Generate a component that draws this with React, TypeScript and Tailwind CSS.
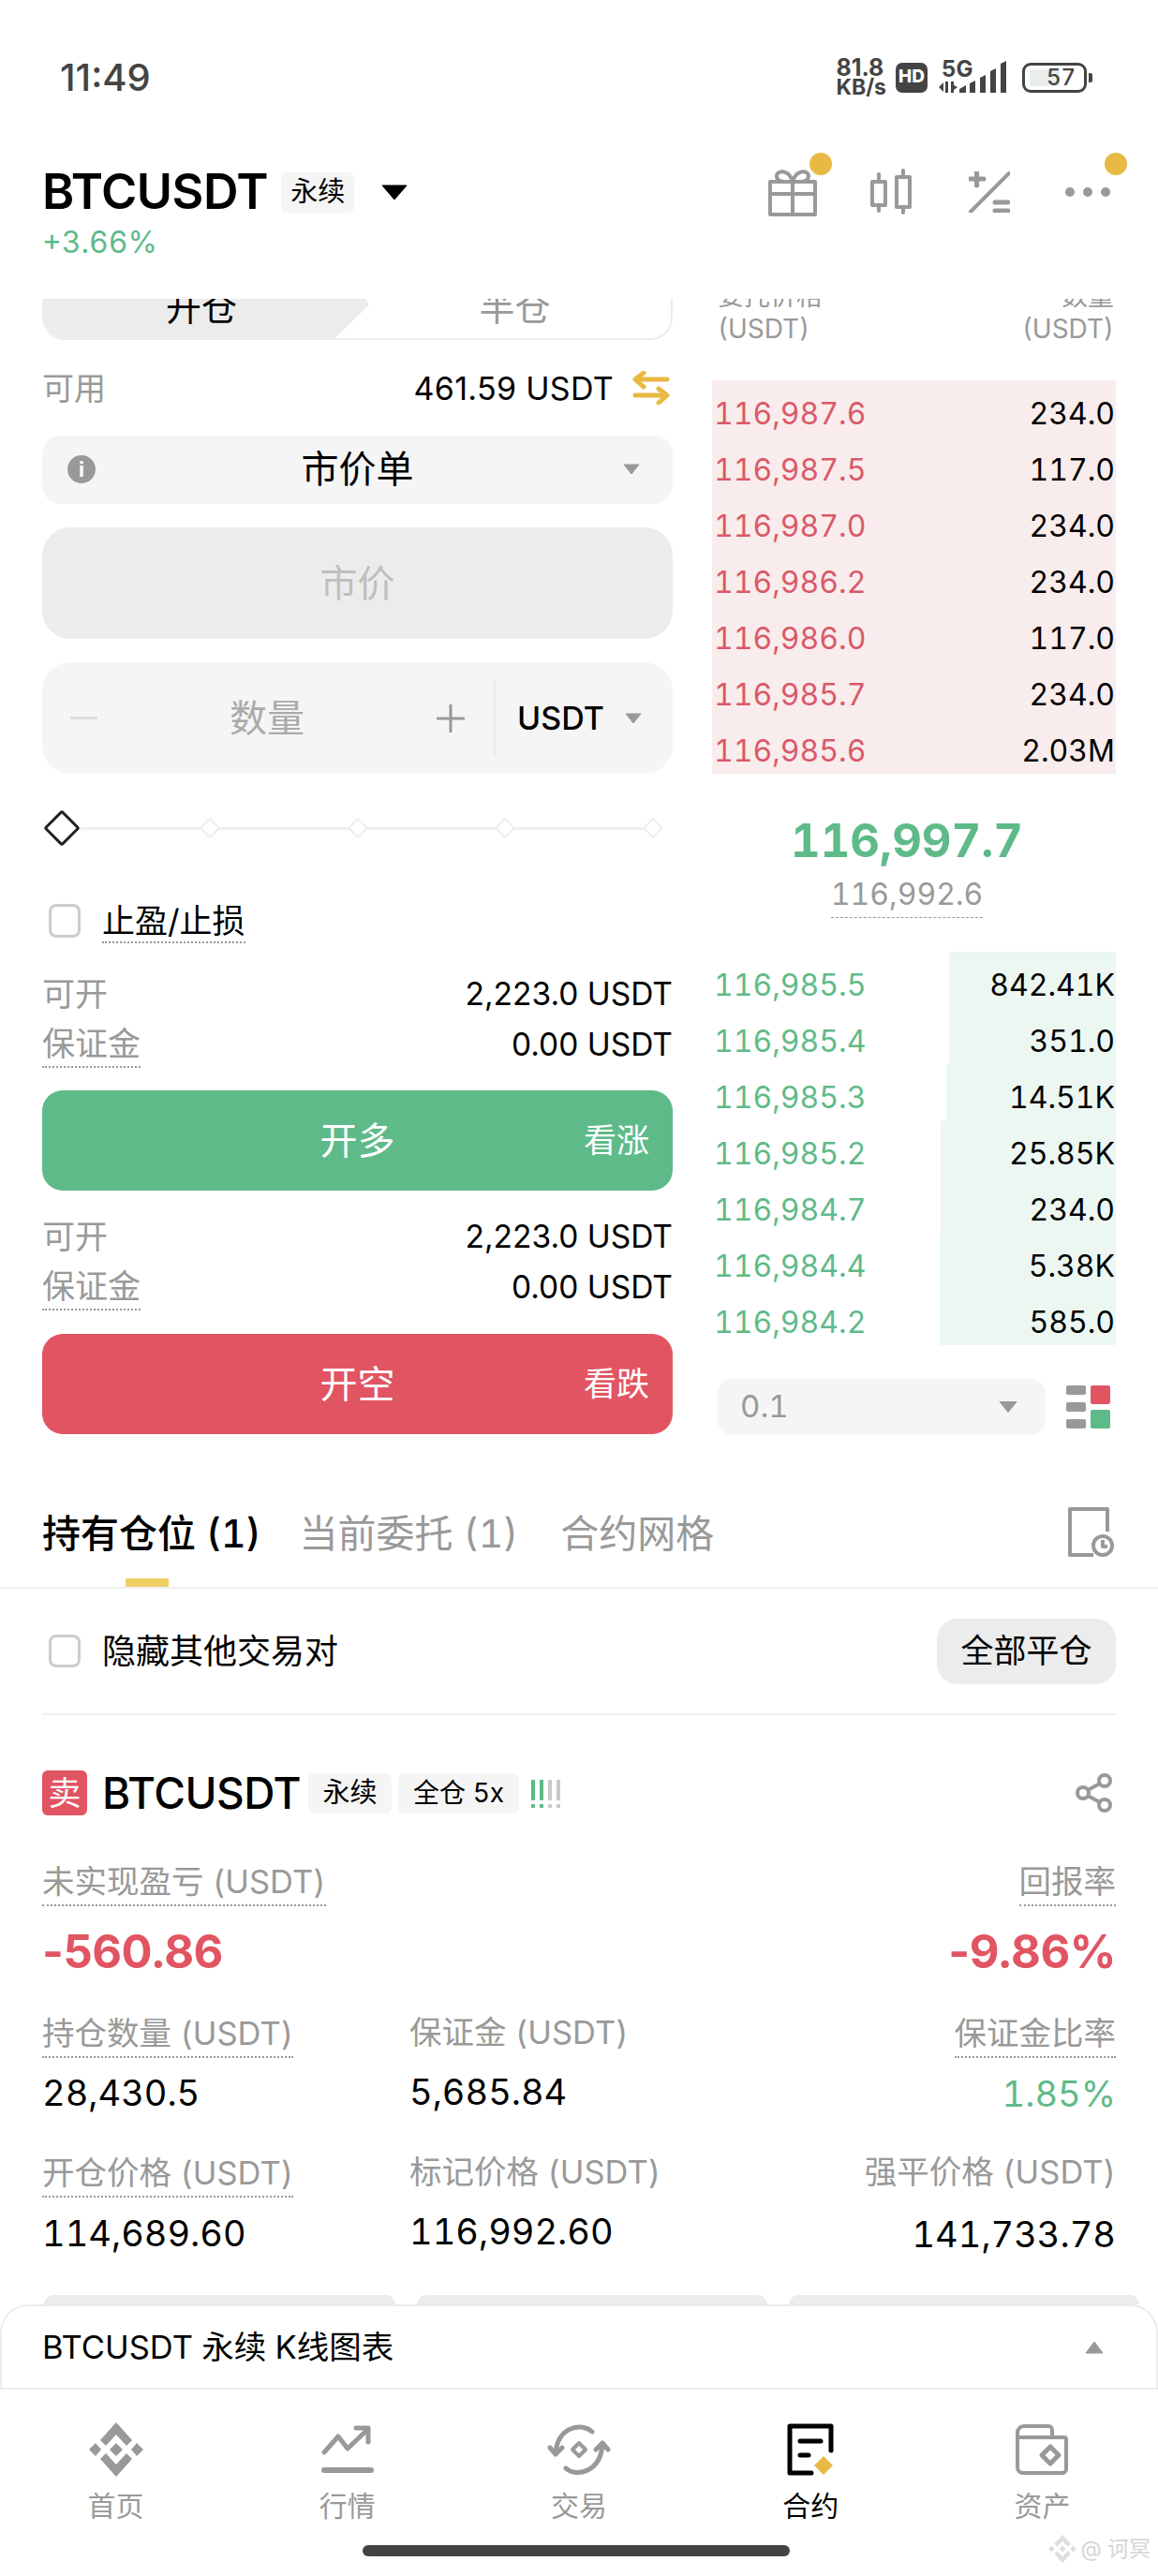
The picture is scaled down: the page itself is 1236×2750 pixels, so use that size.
const asks = [
  ['116,987.6', '234.0'],
  ['116,987.5', '117.0'],
  ['116,987.0', '234.0'],
  ['116,986.2', '234.0'],
  ['116,986.0', '117.0'],
  ['116,985.7', '234.0'],
  ['116,985.6', '2.03M'],
]

const bids = [
  ['116,985.5', '842.41K', 178],
  ['116,985.4', '351.0', 178],
  ['116,985.3', '14.51K', 181],
  ['116,985.2', '25.85K', 187],
  ['116,984.7', '234.0', 187],
  ['116,984.4', '5.38K', 188],
  ['116,984.2', '585.0', 188],
] as const

function Caret({ className = '' }: { className?: string }) {
  return (
    <svg width="18" height="12" viewBox="0 0 18 12" className={className}>
      <path d="M1 1h16L9 11z" fill="#999" stroke="#999" strokeLinejoin="round" />
    </svg>
  )
}

function Dotted({ children }: { children: React.ReactNode }) {
  return <span className="inline-block border-b-2 border-dotted border-[#999] pb-[3px] leading-[42px]">{children}</span>
}

function StatusBar() {
  return (
    <div className="h-[164px] flex items-center justify-between pl-[64px] pr-[70px] pt-[1px] text-[#444]">
      <span className="text-[40px] font-medium leading-none normal-nums">11:49</span>
      <div className="flex items-center">
        <div className="flex flex-col font-bold text-[25px] leading-[21px] normal-nums">
          <span>81.8</span>
          <span className="text-[23px]">KB/s</span>
        </div>
        <div className="ml-[10px] w-[34px] h-[32px] rounded-[7px] bg-[#444] text-white text-[19px] font-extrabold flex items-center justify-center">
          HD
        </div>
        <svg width="74" height="36" viewBox="0 0 74 36" className="ml-[12px] overflow-visible">
          <text x="3" y="17" fontSize="24" fontWeight="700" fill="#444" fontFamily="Inter, sans-serif">5G</text>
          <path d="M0 28l5-5v10zM7 22h3v12H7zM13 22h3v12h-3zM16 26l4 2-4 3z" fill="#444" />
          <path d="M22 34v-4l7-4v8zM33 34V24l6-3v13zM44 34V18l6-3v19zM55 34V11l6-3v26zM66 34V3l6-3v34z" fill="#444" />
        </svg>
        <div className="ml-[15px] relative w-[69px] h-[32px] rounded-[9px] border-[3px] border-[#444] flex items-center justify-center pl-[14px]">
          <div className="absolute left-[5px] top-[4px] bottom-[4px] w-[32px] bg-[#e8efeb]" />
          <span className="relative text-[24px] font-medium leading-none">57</span>
        </div>
        <div className="ml-[2px] w-[4px] h-[10px] rounded-r-[2px] bg-[#444]" />
      </div>
    </div>
  )
}

function Header() {
  return (
    <div className="h-[155px] flex justify-between pl-[45px] pr-[51px]">
      <div>
        <div className="flex items-center h-[44px] mt-[19px]">
          <span className="text-[52px] font-semibold text-black leading-none tracking-[-0.5px] normal-nums">BTCUSDT</span>
          <span className="ml-[14px] w-[78px] h-[43px] rounded-[6px] bg-[#f5f5f5] text-[29px] text-black flex items-center justify-center">永续</span>
          <svg width="28" height="17" viewBox="0 0 28 17" className="ml-[29px]">
            <path d="M1 1h26L14 16z" fill="#000" stroke="#000" strokeLinejoin="round" />
          </svg>
        </div>
        <div className="mt-[12px] text-[32px] leading-[40px] text-[#5fba89]">+3.66%</div>
      </div>
      <div className="flex items-start pt-0">
        <div className="relative mt-[15px] w-[52px] h-[52px]">
          <svg width="52" height="52" viewBox="0 0 52 52" fill="none" stroke="#999" strokeWidth="4" strokeLinejoin="round">
            <path d="M2 15h48v35H2zM2 28h48M26 15v35M26 15c-4-14-18-13-17-5 1 4 5 5 8 5M26 15c4-14 18-13 17-5-1 4-5 5-8 5" />
          </svg>
          <div className="absolute -top-[16px] left-[44px] w-[24px] h-[24px] rounded-full bg-[#e8ba43]" />
        </div>
        <svg width="44" height="49" viewBox="0 0 44 49" fill="none" stroke="#999" strokeWidth="4" strokeLinecap="round" strokeLinejoin="round" className="ml-[57px] mt-[16px]">
          <path d="M2 14h14v25H2zM9 6v8M9 39v6M28 9h14v32H28zM35 2v7M35 41v6" />
        </svg>
        <svg width="44" height="44" viewBox="0 0 44 44" fill="none" stroke="#999" strokeLinecap="round" className="ml-[61px] mt-[19px]">
          <path d="M2 43L43 2" strokeWidth="4" />
          <path d="M1 8h15M8.500 1v14M28 33h14M28 42h14" strokeWidth="5" />
        </svg>
        <div className="relative ml-[59px] mt-[15px] w-[48px] h-[52px] flex items-center justify-between">
          <span className="w-[10px] h-[10px] rounded-full bg-[#999]" />
          <span className="w-[10px] h-[10px] rounded-full bg-[#999]" />
          <span className="w-[10px] h-[10px] rounded-full bg-[#999]" />
          <div className="absolute -top-[16px] left-[42px] w-[24px] h-[24px] rounded-full bg-[#e8ba43]" />
        </div>
      </div>
    </div>
  )
}

function InfoRows() {
  return (
    <>
      <div className="flex justify-between h-[54px] items-center text-[33.500px]">
        <span className="text-[#999] text-[35px]">可开</span>
        <span className="text-black normal-nums">2,223.0 USDT</span>
      </div>
      <div className="flex justify-between h-[54px] items-start text-[33.500px]">
        <span className="text-[#999] text-[35px]"><Dotted>保证金</Dotted></span>
        <span className="text-black leading-[42px] mt-[6px] normal-nums">0.00 USDT</span>
      </div>
    </>
  )
}

function OrderForm() {
  return (
    <div className="w-[673px]">
      <div className="h-[44px] overflow-hidden flex flex-col justify-end">
        <div className="relative h-[88px] shrink-0 rounded-b-[24px] border-r-2 border-b-2 border-[#ececec] flex pt-[18px] text-[38px] leading-[70px]">
          <div className="absolute inset-0 -mr-[1px] rounded-bl-[24px] bg-[#ececec] [clip-path:polygon(0_0,48%_0,51.900%_59%,46.500%_100%,0_100%)]" />
          <div className="relative w-[338px] text-center text-black pl-[2px]">开仓</div>
          <div className="relative flex-1 text-center text-[#999]">半仓</div>
        </div>
      </div>

      <div className="mt-[26px] h-[50px] flex items-center justify-between text-[34px]">
        <span className="text-[#999]">可用</span>
        <div className="flex items-center">
          <span className="text-black normal-nums tracking-[0.3px]">461.59 USDT</span>
          <svg width="40" height="36" viewBox="0 0 40 36" fill="none" stroke="#e8ba43" strokeWidth="5" strokeLinecap="round" strokeLinejoin="round" className="ml-[20px] mr-[3px]">
            <path d="M37 9H4M12 2L3 9l9 8M3 26h33M28 19l9 7-9 8" />
          </svg>
        </div>
      </div>

      <div className="mt-[26px] h-[73px] rounded-[20px] bg-[#f5f5f5] relative flex items-center justify-center text-[40px] leading-[56px] pb-[2px] text-black">
        <div className="absolute left-[27px] top-[21px] w-[30px] h-[30px] rounded-full bg-[#999] text-white text-[22px] leading-none font-bold flex items-center justify-center">i</div>
        市价单
        <Caret className="absolute right-[35px]" />
      </div>

      <div className="mt-[25px] h-[119px] rounded-[30px] bg-[#ececec] flex items-center justify-center text-[40px] text-[#bfbfbf]">市价</div>

      <div className="mt-[25px] h-[119px] rounded-[30px] bg-[#f5f5f5] flex items-center">
        <div className="w-[451px] flex items-center justify-between pl-[30px]">
          <div className="w-[29px] h-[3px] bg-[#dcdcdc]" />
          <span className="text-[40px] text-[#aaa]">数量</span>
          <svg width="30" height="30" viewBox="0 0 30 30" stroke="#999" strokeWidth="3">
            <path d="M0 15h30M15 0v30" />
          </svg>
        </div>
        <div className="ml-[31px] w-[2px] h-[83px] bg-[#ececec]" />
        <span className="ml-[23px] text-[34px] font-medium text-black">USDT</span>
        <Caret className="ml-[22px]" />
      </div>

      <div className="mt-[35px] h-[46px] relative flex items-center justify-between">
        <div className="absolute left-[30px] right-[20px] top-[22px] h-[3px] bg-[#f0f0f0]" />
        <div className="relative w-[42px] flex justify-center">
          <div className="w-[28px] h-[28px] rotate-45 rounded-[3px] border-[3px] border-[#222] bg-white" />
        </div>
        {[0, 1, 2, 3].map((i) => (
          <div key={i} className="relative w-[42px] flex justify-center">
            <div className="w-[16px] h-[16px] rotate-45 rounded-[2px] border-2 border-[#eee] bg-white" />
          </div>
        ))}
      </div>

      <div className="mt-[50px] h-[50px] flex items-start">
        <div className="ml-[7px] mt-[8px] w-[34px] h-[36px] rounded-[8px] border-[3px] border-[#ccc]" />
        <span className="ml-[23px] text-[35px] text-black"><span className="inline-block border-b-2 border-dotted border-[#999] pb-[1px] leading-[42px]">止盈/止损</span></span>
      </div>

      <div className="mt-[27px]"><InfoRows /></div>
      <div className="mt-[22px] h-[107px] rounded-[22px] bg-[#5fba89] relative flex items-center justify-center text-white text-[40px]">
        开多
        <span className="absolute right-[25px] text-[35px]">看涨</span>
      </div>
      <div className="mt-[22px]"><InfoRows /></div>
      <div className="mt-[23px] h-[107px] rounded-[22px] bg-[#e15563] relative flex items-center justify-center text-white text-[40px]">
        开空
        <span className="absolute right-[25px] text-[35px]">看跌</span>
      </div>
    </div>
  )
}

function OrderBook() {
  return (
    <div className="w-[431px] ml-[42px]">
      <div className="h-[50px] overflow-hidden flex flex-col justify-end text-[28px] leading-[35px] text-[#999] pl-[6px] pr-[2px]">
        <div className="flex justify-between">
          <span>委托价格</span>
          <span>数量</span>
        </div>
        <div className="flex justify-between">
          <span>(USDT)</span>
          <span>(USDT)</span>
        </div>
      </div>

      <div className="mt-[37px] bg-[#f9ecec]">
        {asks.map(([price, qty]) => (
          <div key={price} className="h-[60px] pt-[12px] flex items-center justify-between pl-[2px] pr-[1px] text-[32px]">
            <span className="text-[#d9596a]">{price}</span>
            <span className="text-black">{qty}</span>
          </div>
        ))}
      </div>

      <div className="mt-[42px] pr-[15px] text-center text-[49px] font-bold leading-[60px] text-[#5fba89]">116,997.7</div>
      <div className="flex justify-center mt-[7px]">
        <span className="inline-block text-[32px] leading-[40px] text-[#999] border-b border-dashed border-[#999] pb-[4px] -ml-[15px]">116,992.6</span>
      </div>

      <div className="mt-[36px]">
        {bids.map(([price, qty, bar]) => (
          <div key={price} className="relative h-[60px] pt-[12px] flex items-center justify-between pl-[2px] pr-[1px] text-[32px]">
            <div className="absolute right-0 top-0 bottom-0 bg-[#ecf7f2]" style={{ width: bar }} />
            <span className="relative text-[#5fba89]">{price}</span>
            <span className="relative text-black">{qty}</span>
          </div>
        ))}
      </div>

      <div className="mt-[36px] flex items-center">
        <div className="ml-[6px] w-[350px] h-[60px] rounded-[16px] bg-[#f5f5f5] flex items-center justify-between pl-[24px] pr-[31px] text-[33px] text-[#999]">
          0.1
          <Caret className="scale-110" />
        </div>
        <svg width="47" height="46" viewBox="0 0 47 46" className="ml-[22px]">
          <rect x="0" y="0" width="21" height="10" rx="2" fill="#999" />
          <rect x="0" y="18" width="21" height="10" rx="2" fill="#999" />
          <rect x="0" y="36" width="21" height="10" rx="2" fill="#999" />
          <rect x="26" y="0" width="21" height="20" rx="2" fill="#e15563" />
          <rect x="26" y="26" width="21" height="20" rx="2" fill="#5fba89" />
        </svg>
      </div>
    </div>
  )
}

function Positions() {
  return (
    <>
      <div className="relative h-[164px] border-b-2 border-[#f0f0f0] flex items-start justify-between pl-[45px] pr-[47px] pt-[78px] text-[41px] leading-[54px]">
        <div className="flex">
          <span className="font-medium text-black">持有仓位 (1)</span>
          <span className="ml-[41px] text-[#999]">当前委托 (1)</span>
          <span className="ml-[45px] text-[#999]">合约网格</span>
        </div>
        <svg width="50" height="54" viewBox="0 0 50 54" fill="none" stroke="#999" strokeWidth="4" className="mt-[-1px]" strokeLinejoin="round">
          <path d="M28 51H3V2h40v24" />
          <circle cx="38" cy="41" r="10" />
          <path d="M38 35v7h5" />
        </svg>
        <div className="absolute left-[134px] bottom-0 w-[46px] h-[9px] bg-[#f0cf62]" />
      </div>

      <div className="mx-[45px] h-[135px] border-b-2 border-[#f0f0f0] flex items-center justify-between">
        <div className="flex items-center">
          <div className="ml-[7px] w-[34px] h-[35px] rounded-[8px] border-[3px] border-[#ccc]" />
          <span className="ml-[23px] text-[36px] text-black">隐藏其他交易对</span>
        </div>
        <div className="w-[191px] h-[70px] rounded-[22px] bg-[#ececec] flex items-center justify-center text-[35px] text-black">全部平仓</div>
      </div>

      <div className="mx-[45px] mt-[59px] h-[48px] flex items-center">
        <div className="w-[48px] h-[48px] rounded-[6px] bg-[#e15563] text-white text-[35px] flex items-center justify-center">卖</div>
        <span className="ml-[16px] text-[46px] font-medium text-black leading-none tracking-[-0.5px]">BTCUSDT</span>
        <span className="ml-[8px] w-[89px] h-[43px] rounded-[6px] bg-[#f5f5f5] text-[29px] text-black flex items-center justify-center">永续</span>
        <span className="ml-[7px] w-[129px] h-[43px] rounded-[6px] bg-[#f5f5f5] text-[28px] text-black flex items-center justify-center">全仓 5x</span>
        <div className="ml-[13px] flex gap-[5px] mt-[2px]">
          {['#5fba89', '#5fba89', '#c9c9c9', '#c9c9c9'].map((c, i) => (
            <svg key={i} width="4" height="30" viewBox="0 0 4 30">
              <path d="M0 0h4v22H0zM0 26h4v4H0z" fill={c} />
            </svg>
          ))}
        </div>
        <svg width="42" height="42" viewBox="0 0 42 42" fill="none" stroke="#999" strokeWidth="4" className="ml-auto mr-[1px]">
          <circle cx="31" cy="8" r="6" />
          <circle cx="8" cy="21" r="6" />
          <circle cx="31" cy="34" r="6" />
          <path d="M13 18l13-7M13 24l13 7" />
        </svg>
      </div>

      <div className="mx-[45px] mt-[50px] flex items-start justify-between text-[34.500px] text-[#999]">
        <Dotted>未实现盈亏 (USDT)</Dotted>
        <Dotted>回报率</Dotted>
      </div>
      <div className="mx-[45px] mt-[16px] flex justify-between text-[49px] font-bold leading-[66px] tracking-[-0.5px] text-[#e15563] normal-nums">
        <span>-560.86</span>
        <span>-9.86%</span>
      </div>

      <div className="mx-[45px] mt-[28px] grid grid-cols-[392px_1fr_auto] text-[34.500px] text-[#999]">
        <div>
          <Dotted>持仓数量 (USDT)</Dotted>
          <div className="mt-[12px] text-[38px] leading-[50px] text-black">28,430.5</div>
        </div>
        <div className="pt-[4px]">
          <span className="block leading-[42px]">保证金 (USDT)</span>
          <div className="mt-[17px] text-[38px] leading-[50px] text-black">5,685.84</div>
        </div>
        <div className="text-right">
          <Dotted>保证金比率</Dotted>
          <div className="mt-[13px] text-[38px] leading-[50px] text-[#5fba89]">1.85%</div>
        </div>
      </div>

      <div className="mx-[45px] mt-[34px] grid grid-cols-[392px_1fr_auto] text-[34.500px] text-[#999]">
        <div>
          <Dotted>开仓价格 (USDT)</Dotted>
          <div className="mt-[13px] text-[38px] leading-[50px] text-black">114,689.60</div>
        </div>
        <div className="pt-[4px]">
          <span className="block leading-[42px]">标记价格 (USDT)</span>
          <div className="mt-[17px] text-[38px] leading-[50px] text-black">116,992.60</div>
        </div>
        <div className="text-right pt-[4px]">
          <span className="block leading-[42px]">强平价格 (USDT)</span>
          <div className="mt-[20px] text-[38px] leading-[50px] text-black">141,733.78</div>
        </div>
      </div>
    </>
  )
}

function BottomNav() {
  const items = [
    {
      label: '首页',
      active: false,
      icon: (
        <svg width="58" height="58" viewBox="0 0 58 58" fill="#999">
          <path d="M29 0l17 19-6 6-11-12-11 12-6-6zM29 58l17-19-6-6-11 12-11-12-6 6zM29 22l7 7-7 7-7-7zM0 29l7-7 6 7-6 7zM45 29l6-7 7 7-7 7z" />
        </svg>
      ),
    },
    {
      label: '行情',
      active: false,
      icon: (
        <svg width="56" height="52" viewBox="0 0 56 52" fill="none" stroke="#999" strokeWidth="5" strokeLinecap="round" strokeLinejoin="round">
          <path d="M3 29l15-17 10 13L50 4M37 3h13v15" />
          <path d="M3 48h50" strokeWidth="6" />
        </svg>
      ),
    },
    {
      label: '交易',
      active: false,
      icon: (
        <svg width="68" height="54" viewBox="0 0 68 54" fill="none" stroke="#999" strokeWidth="5" strokeLinecap="round" strokeLinejoin="round">
          <path d="M48 8C37-2 12 2 9 30M3 25l6 7 7-7M20 47c11 10 37 4 39-25M52 27l7-7 6 7" />
          <path d="M34 20l7 7-7 7-7-7z" strokeWidth="4" />
        </svg>
      ),
    },
    {
      label: '合约',
      active: true,
      icon: (
        <svg width="50" height="56" viewBox="0 0 50 56" fill="none" stroke="#000" strokeWidth="5" strokeLinecap="round" strokeLinejoin="round">
          <path d="M26 53H3V3h44v26M14 19h22M14 34h9" />
          <path d="M39 35l10 10-10 10-10-10z" fill="#e8ba43" stroke="none" />
        </svg>
      ),
    },
    {
      label: '资产',
      active: false,
      icon: (
        <svg width="56" height="54" viewBox="0 0 56 54" fill="none" stroke="#999" strokeWidth="4" strokeLinejoin="round">
          <path d="M2 9a7 7 0 0 1 7-7h26a4 4 0 0 1 4 4v8h13a2 2 0 0 1 2 2v32a4 4 0 0 1-4 4H8a6 6 0 0 1-6-6zM2 14h37" />
          <path d="M37 24l9 9-9 9-9-9z" strokeWidth="5" />
        </svg>
      ),
    },
  ]
  return (
    <div className="grid grid-cols-5 pt-[35px]">
      {items.map((item) => (
        <div key={item.label} className="flex flex-col items-center">
          <div className="h-[58px] flex items-center justify-center">{item.icon}</div>
          <span className={`mt-[13px] text-[30px] leading-[36px] ${item.active ? 'text-black' : 'text-[#999]'}`}>{item.label}</span>
        </div>
      ))}
    </div>
  )
}

export default function App() {
  return (
    <div className="relative w-[1236px] h-[2750px] overflow-hidden bg-white tabular-nums font-[Inter,'Noto_Sans_CJK_SC',sans-serif]">
      <StatusBar />
      <Header />
      <div className="flex px-[45px]">
        <OrderForm />
        <OrderBook />
      </div>
      <Positions />

      <div className="mt-[40px] flex pl-[47px] gap-[23px]">
        <div className="w-[375px] h-[10px] shrink-0 rounded-t-[12px] bg-[#ececec]" />
        <div className="w-[374px] h-[10px] shrink-0 rounded-t-[12px] bg-[#ececec]" />
        <div className="w-[374px] h-[10px] shrink-0 rounded-t-[12px] bg-[#ececec]" />
      </div>
      <div className="h-[91px] rounded-t-[30px] border-x-2 border-t-2 border-b-2 border-[#ececec] flex items-center justify-between pl-[43px] pr-[56px] bg-white">
        <span className="text-[34.500px] text-black">BTCUSDT 永续 K线图表</span>
        <svg width="20" height="14" viewBox="0 0 20 14">
          <path d="M1 13L10 1l9 12z" fill="#999" stroke="#999" strokeLinejoin="round" />
        </svg>
      </div>
      <BottomNav />

      <div className="absolute left-[387px] top-[2717px] w-[456px] h-[12px] rounded-full bg-[#444]" />
      <div className="absolute right-[8px] top-[2706px] flex items-center text-[#d4d4d4]">
        <svg width="30" height="30" viewBox="0 0 58 58" fill="#dedede">
          <path d="M29 0l17 19-6 6-11-12-11 12-6-6zM29 58l17-19-6-6-11 12-11-12-6 6zM29 22l7 7-7 7-7-7zM0 29l7-7 6 7-6 7zM45 29l6-7 7 7-7 7z" />
        </svg>
        <span className="ml-[5px] text-[23px] leading-[30px]">@ 诃冥</span>
      </div>
    </div>
  )
}
